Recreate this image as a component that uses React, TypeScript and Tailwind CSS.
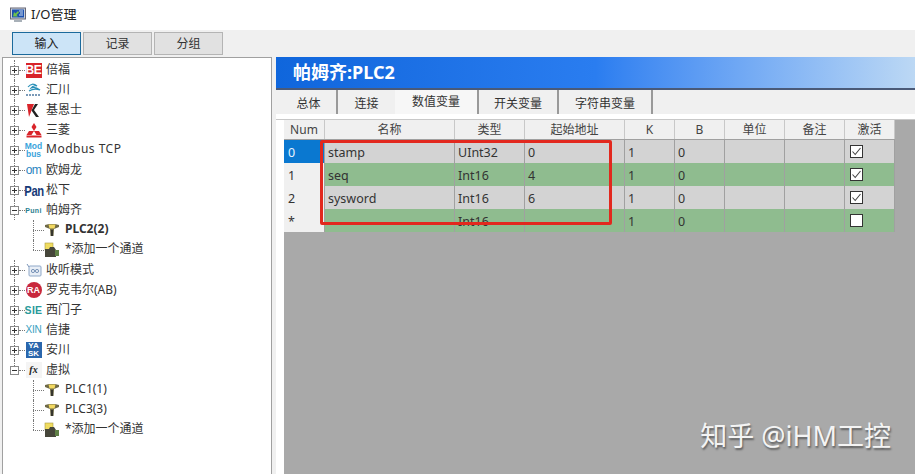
import { ReactNode } from "react";

const font = "font-['Noto_Sans','Noto_Sans_CJK_SC',sans-serif]";

const Valve = () => (
  <svg width="16" height="16" viewBox="0 0 16 16">
    <path d="M1 3 L5 2 H11 L15 3 V5 L10 7 L9.5 14 H6.5 L6 7 L1 5 Z" fill="#6f6a48" />
    <path d="M4.5 2.5 H11.5 L10.5 6.5 H5.5 Z" fill="#f2d860" />
    <rect x="7" y="8" width="2" height="6" fill="#35352c" />
  </svg>
);

const AddChannel = () => (
  <svg width="16" height="16" viewBox="0 0 16 16">
    <rect x="1" y="1" width="8" height="7" fill="#f0dc60" stroke="#a89a40" strokeWidth="0.6" />
    <path d="M1 7 H5 L6 5 H10 L12 8 V15 H1 Z" fill="#46463a" />
    <rect x="11" y="8" width="4" height="6" fill="#5f8046" />
  </svg>
);

const Expander = ({ open }: { open?: boolean }) => (
  <span className="relative z-10 flex h-[9px] w-[9px] shrink-0 items-center justify-center border border-[#8a8a8a] bg-white">
    <span className="absolute h-px w-[5px] bg-[#333]" />
    {!open && <span className="absolute h-[5px] w-px bg-[#333]" />}
  </span>
);

const TreeRow = ({ icon, label, open, last, tracking }: { icon: ReactNode; label: string; open?: boolean; last?: boolean; tracking?: boolean }) => (
  <div className="relative flex h-5 items-center pl-[7px]">
    <span className={`absolute left-[11px] top-0 w-0 border-l border-dotted border-[#777] ${last ? "h-[10px]" : "h-5"}`} />
    <Expander open={open} />
    <span className="w-[6px] border-t border-dotted border-[#777]" />
    <span className="flex h-4 w-[17px] items-center justify-center overflow-visible">{icon}</span>
    <span className={`ml-[4px] text-[12px] leading-none text-[#333] ${tracking ? "mb-[2px] tracking-[0.5px]" : ""}`}>{label}</span>
  </div>
);

const ChildRow = ({ icon, label, bold, last }: { icon: ReactNode; label: string; bold?: boolean; last?: boolean }) => (
  <div className="relative flex h-5 items-center pl-[30px]">
    <span className={`absolute left-[30px] top-0 w-0 border-l border-dotted border-[#777] ${last ? "h-[10px]" : "h-5"}`} />
    <span className="w-[11px] border-t border-dotted border-[#777]" />
    <span className="flex h-4 w-4 items-center justify-center">{icon}</span>
    <span className={`mb-[2px] ml-[5px] text-[12px] leading-none text-[#333] ${bold ? "font-bold" : ""}`}>{label}</span>
  </div>
);

const Logo = ({ children, className }: { children: ReactNode; className: string }) => (
  <span className={`whitespace-nowrap font-['Liberation_Sans',sans-serif] font-bold leading-none ${className}`}>{children}</span>
);

const Check = ({ checked }: { checked: boolean }) => (
  <span className="ml-[2px] flex h-[13px] w-[13px] items-center justify-center border border-[#333] bg-white">
    {checked && (
      <svg width="11" height="11" viewBox="0 0 11 11">
        <path d="M1.5 5.5 L4.2 8.5 L9.5 2" fill="none" stroke="#444" strokeWidth="1.1" />
      </svg>
    )}
  </span>
);

const columns = "grid grid-cols-[41px_130px_70px_100px_50px_50px_60px_60px_50px]";
const headers = ["Num", "名称", "类型", "起始地址", "K", "B", "单位", "备注", "激活"];

const rows = [
  { num: "0", name: "stamp", type: "UInt32", addr: "0", on: true, bg: "bg-[#d3d3d3]" },
  { num: "1", name: "seq", type: "Int16", addr: "4", on: true, bg: "bg-[#8fbc8f]" },
  { num: "2", name: "sysword", type: "Int16", addr: "6", on: true, bg: "bg-[#d3d3d3]" },
  { num: "*", name: "", type: "Int16", addr: "", on: false, bg: "bg-[#8fbc8f]" },
];

const tabs = [
  { label: "总体", w: "w-[57px]", sep: true },
  { label: "连接", w: "w-[57px]", sep: false },
  { label: "数值变量", w: "w-[84px]", sep: true, active: true },
  { label: "开关变量", w: "w-[80px]", sep: true },
  { label: "字符串变量", w: "w-[94px]", sep: true },
];

const Cell = ({ children, className = "" }: { children?: ReactNode; className?: string }) => (
  <div className={`flex items-center border-r border-[#a0a0a0] pl-[3px] pt-[3px] text-[12.5px] text-[#333] ${className}`}>{children}</div>
);

export default function App() {
  return (
    <div className={`flex h-[474px] w-[915px] flex-col overflow-hidden bg-[#f0f0f0] ${font}`}>
      <div className="flex h-[30px] shrink-0 items-center bg-white pl-[10px]">
        <svg width="16" height="16" viewBox="0 0 16 16">
          <rect x="0.5" y="1" width="15" height="11" fill="#c8d0d8" stroke="#667" />
          <rect x="2" y="2.5" width="12" height="8" fill="#1b4fb0" />
          <path d="M3 9.5 L4 5 L5.5 6.5 L8 4 L9 5.5 L6.5 8 L8 9.5 Z" fill="#6fc24a" />
          <path d="M9 4 H13 M10 6 H13 M9 8 H13" stroke="#d0e0f0" />
          <rect x="4" y="13" width="8" height="2" fill="#a8b0b8" />
        </svg>
        <span className="ml-[5px] text-[13px] text-[#222]">I/O管理</span>
      </div>
      <div className="flex h-[27px] shrink-0 items-start gap-[2px] pl-[12px] pt-[2px]">
        <button className="h-[23px] w-[69px] border border-[#1c6a9c] bg-[#cce4f7] text-[12px] text-[#222]">输入</button>
        <button className="h-[23px] w-[69px] border border-[#b4b4b4] bg-[#e1e1e1] text-[12px] text-[#333]">记录</button>
        <button className="h-[23px] w-[69px] border border-[#b4b4b4] bg-[#e1e1e1] text-[12px] text-[#333]">分组</button>
      </div>
      <div className="flex min-h-0 flex-1">
        <div className="ml-[2px] w-[270px] shrink-0 border border-b-0 border-[#a0a0a0] bg-white pt-[2px]">
          <TreeRow label="倍福" icon={<Logo className="flex h-[15px] w-4 items-center justify-center bg-[#d8232a] text-[12px] tracking-[-0.4px] text-white">BE</Logo>} />
          <TreeRow label="汇川" icon={
            <svg width="17" height="16" viewBox="0 0 17 16">
              <path d="M3 5 Q7 0 12 4 Q8 3 6 6 Q10 4 15 8 Q9 6 4 9" fill="none" stroke="#2a90b8" strokeWidth="1.2" />
              <path d="M1 13 H16" stroke="#7a9ab8" strokeWidth="2" strokeDasharray="2 1" />
            </svg>
          } />
          <TreeRow label="基恩士" icon={
            <svg width="15" height="15" viewBox="0 0 15 15">
              <path d="M1 1 H8 L3 14 Z" fill="#d9242a" />
              <path d="M9 1 H12 L8 7 L13 14 H10 L5.5 7.5 Z" fill="#222" />
            </svg>
          } />
          <TreeRow label="三菱" icon={
            <svg width="16" height="15" viewBox="0 0 16 15">
              <path d="M8 0 L10.5 4 L8 8 L5.5 4 Z M8 8 L5.5 12 H0.5 L3 8 Z M8 8 H13 L15.5 12 H10.5 Z" fill="#d9242a" />
              <rect x="0.5" y="12.5" width="15" height="2" fill="#d9242a" />
            </svg>
          } />
          <TreeRow label="Modbus TCP" tracking icon={
            <Logo className="text-center text-[8.5px] text-[#3aa4dc]">Mod<br />bus</Logo>
          } />
          <TreeRow label="欧姆龙" icon={<Logo className="text-[12px] font-normal tracking-[-0.5px] text-[#2a84c0]">om</Logo>} />
          <TreeRow label="松下" icon={<Logo className="scale-x-75 text-[15px] tracking-[-0.5px] text-[#173a78]">Pan</Logo>} />
          <TreeRow label="帕姆齐" open icon={<Logo className="text-[7px] tracking-[0.3px] text-[#2a8090]">Puni</Logo>} />
          <ChildRow label="PLC2(2)" bold icon={<Valve />} />
          <ChildRow label="*添加一个通道" last icon={<AddChannel />} />
          <TreeRow label="收听模式" icon={
            <svg width="16" height="14" viewBox="0 0 16 14">
              <rect x="3" y="3" width="12" height="10" rx="1" fill="#e8eef6" stroke="#8fa8c8" />
              <circle cx="7" cy="8" r="1.6" fill="none" stroke="#7a94b8" />
              <circle cx="11" cy="8" r="1.6" fill="none" stroke="#7a94b8" />
              <path d="M1 1 L3 4" stroke="#7a94b8" />
            </svg>
          } />
          <TreeRow label="罗克韦尔(AB)" icon={
            <span className="flex h-4 w-4 items-center justify-center rounded-full bg-[#c8283c]">
              <Logo className="text-[9px] text-white">RA</Logo>
            </span>
          } />
          <TreeRow label="西门子" icon={<Logo className="text-[10.5px] tracking-[0.3px] text-[#2a9a9a]">SIE</Logo>} />
          <TreeRow label="信捷" icon={<Logo className="text-[10px] font-normal tracking-[-0.3px] text-[#38a0c0]">XIN</Logo>} />
          <TreeRow label="安川" icon={
            <Logo className="flex h-4 w-4 items-center justify-center bg-[#2a66ac] text-center text-[8px] text-white">YA<br />SK</Logo>
          } />
          <TreeRow label="虚拟" open last icon={
            <span className="flex h-4 w-4 items-center justify-center bg-[#f4f4f4] font-['Liberation_Serif',serif] text-[10px] font-bold italic leading-none text-[#222]">fx</span>
          } />
          <ChildRow label="PLC1(1)" icon={<Valve />} />
          <ChildRow label="PLC3(3)" icon={<Valve />} />
          <ChildRow label="*添加一个通道" last icon={<AddChannel />} />
        </div>
        <div className="ml-[4px] flex min-w-0 flex-1 flex-col bg-white">
          <div className="flex h-[33px] shrink-0 items-center border-b-2 border-[#4a5a78] bg-gradient-to-r from-[#0f66dc] via-[#2a7df0] to-[#bcd8f4] pl-[17px] text-[18px] font-bold text-white">
            帕姆齐:PLC2
          </div>
          <div className="flex h-[24px] shrink-0 items-stretch bg-[#f0f0f0] pl-[5px]">
            {tabs.map((t) => (
              <div
                key={t.label}
                className={`flex ${t.w} justify-center text-[12px] text-[#333] ${t.sep ? "border-r-2 border-[#999]" : ""} ${t.active ? "items-start bg-[#f7f7f7] pt-[3px]" : "items-start pt-[5px]"}`}
              >
                {t.label}
              </div>
            ))}
          </div>
          <div className="h-[6px] shrink-0 border-b border-[#c8c8c8] bg-white" />
          <div className="flex min-h-0 flex-1 flex-col bg-white pl-[8px]">
            <div className="relative flex-1 bg-[#a9a9a9]">
              <div className={`${columns} h-5 w-[611px] border-b border-[#a0a0a0] bg-[#f0f0f0]`}>
                {headers.map((h) => (
                  <div key={h} className="flex items-center justify-center border-r border-[#c8c8c8] text-[12px] text-[#444]">{h}</div>
                ))}
              </div>
              {rows.map((r, i) => (
                <div key={r.num} className={`${columns} h-[23px] w-[611px] ${r.bg}`}>
                  <div className={`flex items-center border-r border-[#a0a0a0] pl-[4px] pt-[3px] text-[12.5px] ${i === 0 ? "bg-[#0a78d0] text-[#e8f4ff]" : "bg-[#f0f0f0] text-[#333]"}`}>{r.num}</div>
                  <Cell>{r.name}</Cell>
                  <Cell>{r.type}</Cell>
                  <Cell>{r.addr}</Cell>
                  <Cell>1</Cell>
                  <Cell>0</Cell>
                  <Cell />
                  <Cell />
                  <Cell className="!pt-0"><Check checked={r.on} /></Cell>
                </div>
              ))}
              <div className="absolute left-[36px] top-[20px] h-[85px] w-[292px] rounded-[2px] border-[3px] border-[#e2281e]" />
              <div className="absolute right-[24px] top-[302px] whitespace-nowrap text-[27px] leading-none text-[#f4f4f4] [text-shadow:1px_2px_2px_rgba(0,0,0,0.45)]">
                知乎 @iHM工控
              </div>
            </div>
          </div>
        </div>
      </div>
    </div>
  );
}
